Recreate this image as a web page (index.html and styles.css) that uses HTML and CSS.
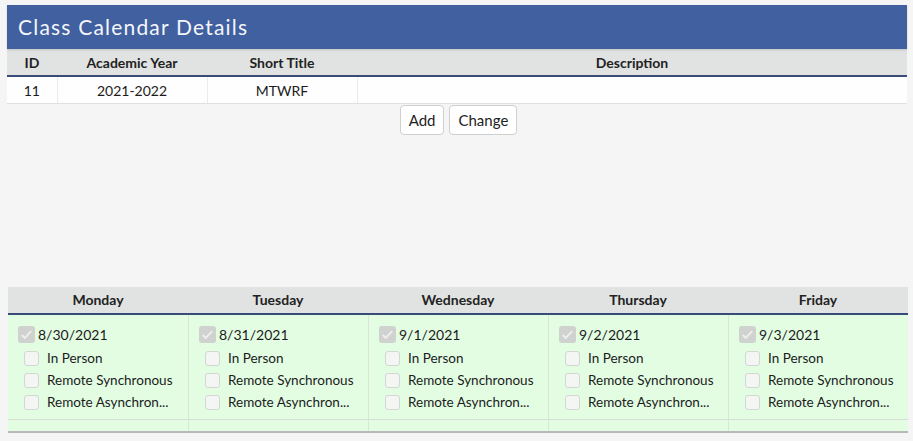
FILE: index.html
```html
<!DOCTYPE html>
<html>
<head>
<meta charset="utf-8">
<link rel="stylesheet" href="styles.css">
</head>
<body>
<div class="page">
  <section class="panel">
    <h1 class="title">Class Calendar Details</h1>
    <table class="grid">
      <colgroup>
        <col class="c-id"><col class="c-year"><col class="c-short"><col>
      </colgroup>
      <thead>
        <tr><th>ID</th><th>Academic Year</th><th>Short Title</th><th>Description</th></tr>
      </thead>
      <tbody>
        <tr><td>11</td><td>2021-2022</td><td>MTWRF</td><td></td></tr>
      </tbody>
    </table>
    <div class="actions">
      <button class="btn">Add</button>
      <button class="btn">Change</button>
    </div>
  </section>

  <section class="week">
    <div class="week-head">
      <div>Monday</div><div>Tuesday</div><div>Wednesday</div><div>Thursday</div><div>Friday</div>
    </div>
    <div class="week-body">
      <div class="day">
        <div class="date"><span class="dbox"><svg viewBox="0 0 18 18"><path d="M4 9.5l3.2 3.2L14 5.5" fill="none" stroke="#eeeeee" stroke-width="2"/></svg></span>8/30/2021</div>
        <div class="opt"><span class="box"></span>In Person</div>
        <div class="opt"><span class="box"></span>Remote Synchronous</div>
        <div class="opt"><span class="box"></span>Remote Asynchron...</div>
      </div>
      <div class="day">
        <div class="date"><span class="dbox"><svg viewBox="0 0 18 18"><path d="M4 9.5l3.2 3.2L14 5.5" fill="none" stroke="#eeeeee" stroke-width="2"/></svg></span>8/31/2021</div>
        <div class="opt"><span class="box"></span>In Person</div>
        <div class="opt"><span class="box"></span>Remote Synchronous</div>
        <div class="opt"><span class="box"></span>Remote Asynchron...</div>
      </div>
      <div class="day">
        <div class="date"><span class="dbox"><svg viewBox="0 0 18 18"><path d="M4 9.5l3.2 3.2L14 5.5" fill="none" stroke="#eeeeee" stroke-width="2"/></svg></span>9/1/2021</div>
        <div class="opt"><span class="box"></span>In Person</div>
        <div class="opt"><span class="box"></span>Remote Synchronous</div>
        <div class="opt"><span class="box"></span>Remote Asynchron...</div>
      </div>
      <div class="day">
        <div class="date"><span class="dbox"><svg viewBox="0 0 18 18"><path d="M4 9.5l3.2 3.2L14 5.5" fill="none" stroke="#eeeeee" stroke-width="2"/></svg></span>9/2/2021</div>
        <div class="opt"><span class="box"></span>In Person</div>
        <div class="opt"><span class="box"></span>Remote Synchronous</div>
        <div class="opt"><span class="box"></span>Remote Asynchron...</div>
      </div>
      <div class="day">
        <div class="date"><span class="dbox"><svg viewBox="0 0 18 18"><path d="M4 9.5l3.2 3.2L14 5.5" fill="none" stroke="#eeeeee" stroke-width="2"/></svg></span>9/3/2021</div>
        <div class="opt"><span class="box"></span>In Person</div>
        <div class="opt"><span class="box"></span>Remote Synchronous</div>
        <div class="opt"><span class="box"></span>Remote Asynchron...</div>
      </div>
    </div>
    <div class="week-foot">
      <div></div><div></div><div></div><div></div><div></div>
    </div>
  </section>
</div>
</body>
</html>
```

FILE: styles.css
```css
html, body {
  margin: 0;
  padding: 0;
  background: #f5f5f5;
  font-family: "Lato", "Open Sans", sans-serif;
  color: #1b1b1b;
}

.page {
  padding: 5px 6px 0 7px;
}

.panel {
  width: 900px;
}

.title {
  margin: 0;
  height: 44px;
  background: #4160a0;
  color: #f4f6fb;
  font-weight: 400;
  font-size: 21px;
  letter-spacing: 1.2px;
  line-height: 44px;
  padding-left: 11px;
  box-shadow: 0 1px 2px rgba(0,0,0,0.15);
  position: relative;
}

.grid {
  width: 100%;
  border-collapse: collapse;
  table-layout: fixed;
  font-size: 14px;
}

.c-id { width: 50px; }
.c-year { width: 150px; }
.c-short { width: 150px; }

.grid th {
  background: #e1e3e3;
  height: 26px;
  font-weight: 700;
  color: #222;
  border-bottom: 2px solid #394b78;
  padding: 0;
  text-align: center;
}

.grid td {
  background: #fefefe;
  height: 26px;
  text-align: center;
  padding: 0;
  border-left: 1px solid #ebebeb;
  border-bottom: 1px solid #e0e0e0;
  font-size: 14px;
}

.grid td:first-child { border-left: none; }

.actions {
  display: flex;
  justify-content: center;
  gap: 5px;
  padding-top: 1px;
  padding-left: 3px;
}

.btn {
  font-family: inherit;
  font-size: 15px;
  color: #222;
  background: #ffffff;
  border: 1px solid #cfcfcf;
  border-radius: 4px;
  height: 30px;
  padding: 0 8px;
}

.week {
  margin-top: 152px;
  margin-left: 1px;
  width: 900px;
}

.week-head {
  display: grid;
  grid-template-columns: repeat(5, 1fr);
  background: #e1e3e3;
  border-bottom: 2px solid #394b78;
  height: 26px;
  font-size: 14px;
  font-weight: 700;
  color: #222;
}

.week-head div {
  text-align: center;
  line-height: 26px;
}

.week-body, .week-foot {
  display: grid;
  grid-template-columns: repeat(5, 1fr);
  background: #e3fde3;
}

.day {
  border-left: 1px solid #d9e6d9;
  padding: 10px 0 6px 10px;
  font-size: 13.5px;
}

.day:first-child, .week-foot div:first-child { border-left: none; }

.date {
  display: flex;
  align-items: center;
  height: 19px;
  margin-bottom: 3px;
  font-size: 14px;
}

.dbox {
  width: 17px;
  height: 17px;
  background: #cfd2cf;
  border-radius: 3px;
  margin-right: 3px;
  display: flex;
}

.dbox svg { width: 17px; height: 17px; }

.opt {
  display: flex;
  align-items: center;
  height: 22px;
  padding-left: 6px;
}

.box {
  width: 13px;
  height: 13px;
  border: 1px solid #d3d6d3;
  background: #f3f6f3;
  border-radius: 3px;
  margin-right: 8px;
}

.week-foot {
  border-top: 1px solid #d9dcd9;
  border-bottom: 2px solid #b9b9b9;
}

.week-foot div {
  height: 11px;
  border-left: 1px solid #d9e6d9;
}
```
